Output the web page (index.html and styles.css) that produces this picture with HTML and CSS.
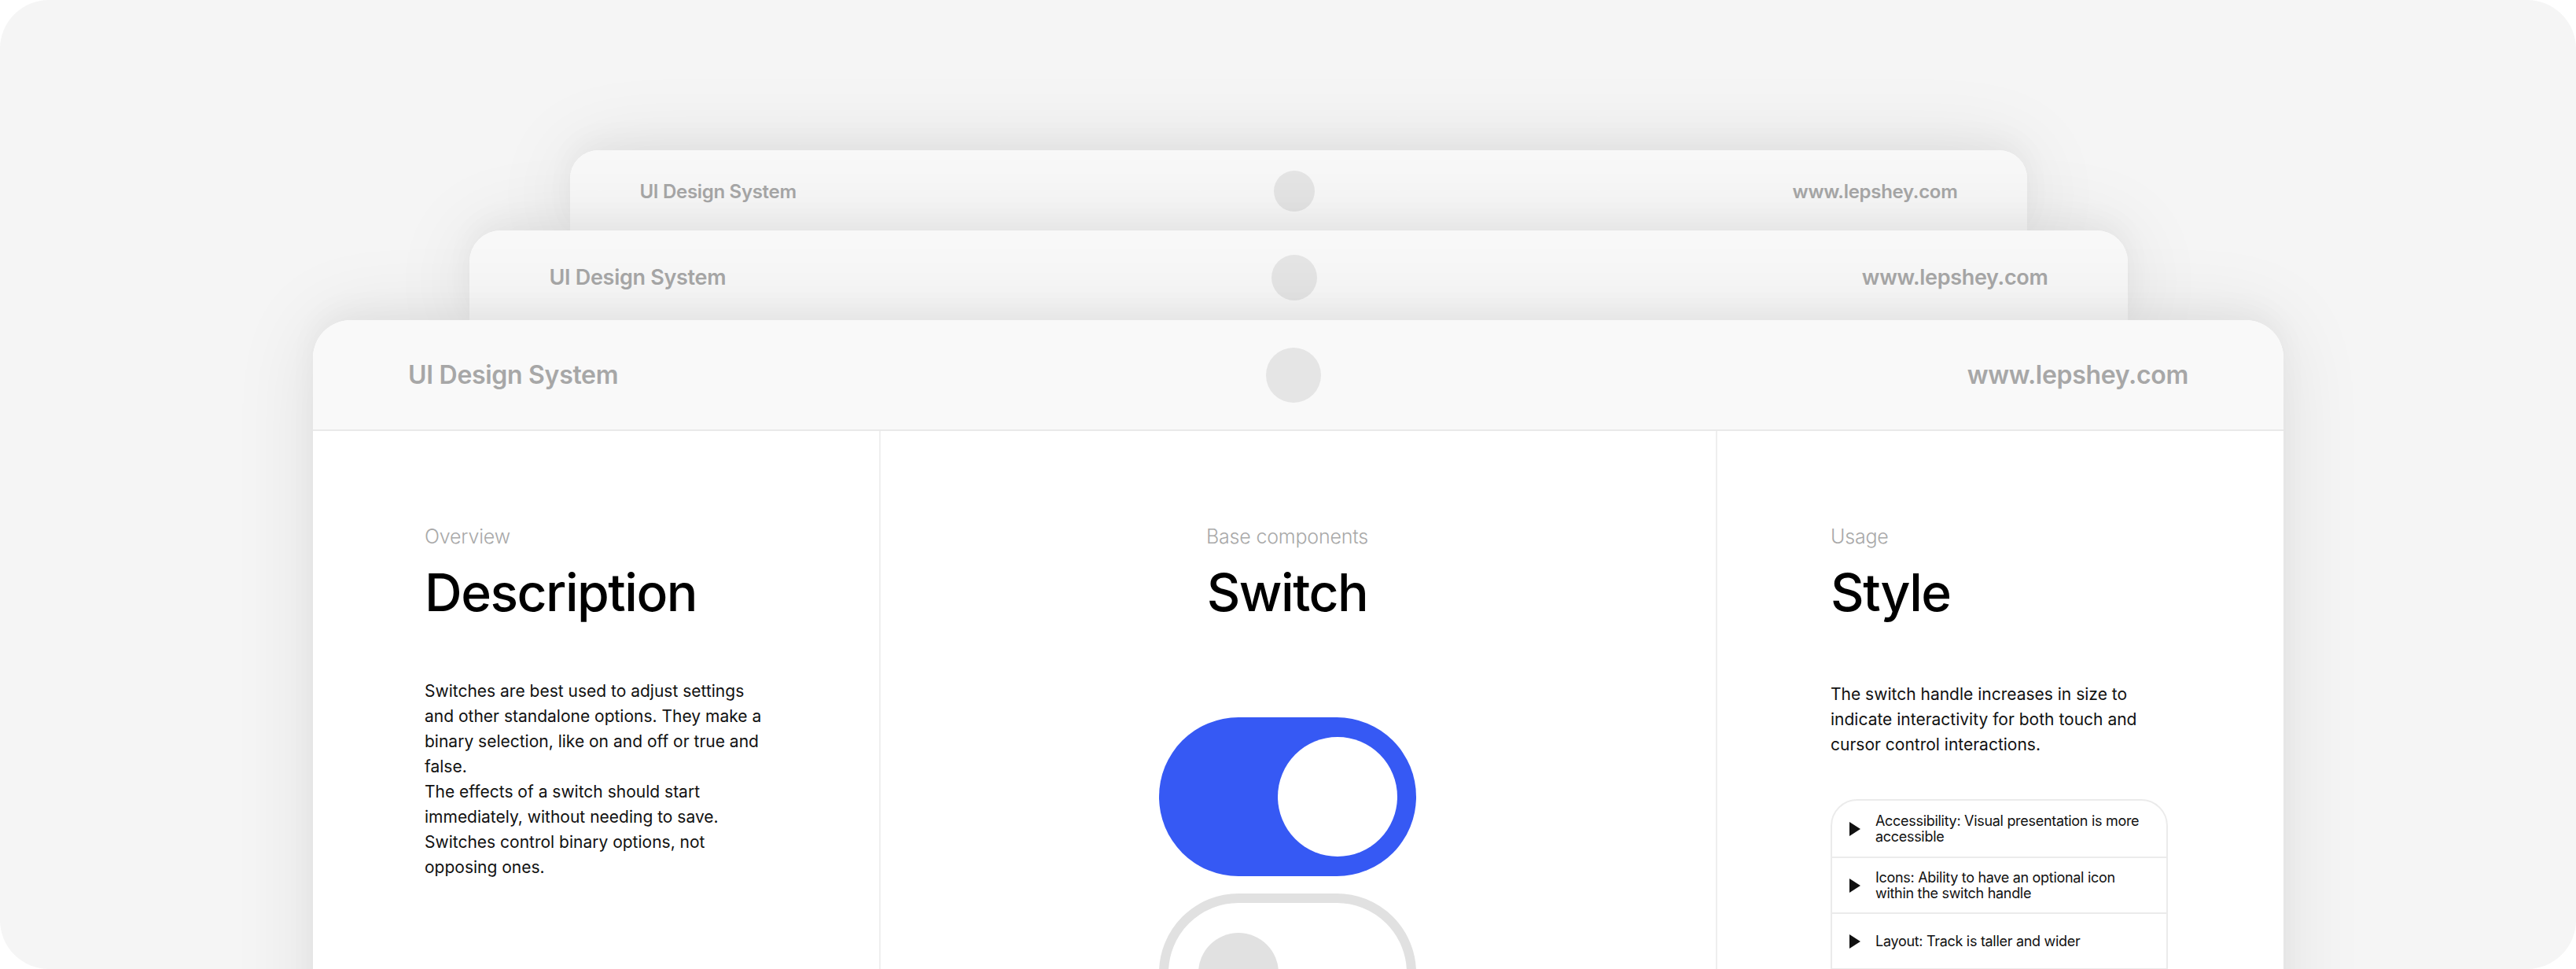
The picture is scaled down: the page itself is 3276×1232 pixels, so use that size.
FILE: index.html
```html
<!DOCTYPE html>
<html lang="en">
<head>
<meta charset="utf-8">
<title>Switch – UI Design System</title>
<link rel="stylesheet" href="styles.css">
</head>
<body>
<div class="frame">
  <div class="card card-back3">
    <header class="bar">
      <span class="brand">UI Design System</span>
      <span class="dot"></span>
      <span class="url">www.lepshey.com</span>
    </header>
  </div>
  <div class="card card-back2">
    <header class="bar">
      <span class="brand">UI Design System</span>
      <span class="dot"></span>
      <span class="url">www.lepshey.com</span>
    </header>
  </div>
  <div class="card card-front">
    <header class="bar">
      <span class="brand">UI Design System</span>
      <span class="dot"></span>
      <span class="url">www.lepshey.com</span>
    </header>
    <div class="body">
      <section class="col col-desc">
        <div class="eyebrow">Overview</div>
        <h1 class="title">Description</h1>
        <p class="text text-desc">Switches are best used to adjust settings and other standalone options. They make a binary selection, like on and off or true and false.<br>The effects of a switch should start immediately, without needing to save.<br>Switches control binary options, not opposing ones.</p>
      </section>
      <section class="col col-switch">
        <div class="eyebrow">Base components</div>
        <h1 class="title">Switch</h1>
        <div class="switch switch-on"><span class="knob"></span></div>
        <div class="switch switch-off"><span class="knob"></span></div>
      </section>
      <section class="col col-style">
        <div class="eyebrow">Usage</div>
        <h1 class="title">Style</h1>
        <p class="text text-style">The switch handle increases in size to indicate interactivity for both touch and cursor control interactions.</p>
        <ul class="list">
          <li class="item"><span class="tri"></span><span>Accessibility: Visual presentation is more accessible</span></li>
          <li class="item"><span class="tri"></span><span>Icons: Ability to have an optional icon within the switch handle</span></li>
          <li class="item"><span class="tri"></span><span>Layout: Track is taller and wider</span></li>
        </ul>
      </section>
    </div>
  </div>
</div>
</body>
</html>
```
FILE: styles.css
```css
html, body {
  margin: 0;
  padding: 0;
  background: #ffffff;
}

body {
  font-family: Inter, "Noto Sans", "Liberation Sans", sans-serif;
  color: #111111;
}

.frame {
  width: 3276px;
  height: 1232px;
  box-sizing: border-box;
  background: #f5f5f5;
  border-radius: 62px;
  overflow: hidden;
  display: flex;
  flex-direction: column;
  align-items: center;
  padding-top: 191px;
  padding-left: 26px;
}

.card {
  flex-shrink: 0;
  background: #ffffff;
  box-shadow: 0 0 110px rgba(0, 0, 0, 0.09), 0 -14px 36px rgba(0, 0, 0, 0.035);
}

.bar {
  display: grid;
  grid-template-columns: 1fr auto 1fr;
  align-items: center;
  background: #f8f8f8;
  box-sizing: border-box;
  color: #a7a7a7;
  font-weight: 600;
  letter-spacing: -0.3px;
}

.brand { justify-self: start; }
.url { justify-self: end; }

.dot {
  display: block;
  border-radius: 50%;
  background: #e5e5e5;
  margin-right: 12px;
}

/* back card 3 */
.card-back3 {
  width: 1853px;
  height: 104px;
  margin-bottom: -2px;
  border-radius: 36px 36px 0 0;
  overflow: hidden;
}
.card-back3 .bar {
  height: 104px;
  padding: 0 88px 0 89px;
  font-size: 24px;
}
.card-back3 .dot { width: 52px; height: 52px; }

/* back card 2 */
.card-back2 {
  width: 2109px;
  height: 119px;
  margin-bottom: -5px;
  border-radius: 40px 40px 0 0;
  overflow: hidden;
}
.card-back2 .bar {
  height: 119px;
  padding: 0 101px 0 102px;
  font-size: 27px;
}
.card-back2 .dot { width: 58px; height: 58px; }

/* front card */
.card-front {
  width: 2506px;
  height: 1000px;
  border-radius: 48px 48px 0 0;
  overflow: hidden;
  display: flex;
  flex-direction: column;
}
.card-front .bar {
  height: 141px;
  padding: 0 121px;
  font-size: 32px;
  background: #f9f9f9;
  border-bottom: 2px solid #e9e9e9;
}
.card-front .dot { width: 70px; height: 70px; }

.body {
  flex: 1;
  display: grid;
  grid-template-columns: 720px 1066px 1fr;
}

.col {
  box-sizing: border-box;
  padding-top: 117px;
}

.col-desc { padding-left: 142px; }

.col-switch {
  border-left: 2px solid #efefef;
  border-right: 2px solid #efefef;
  padding-right: 28px;
  display: flex;
  flex-direction: column;
  align-items: center;
}

.col-style { padding-left: 144px; }

.eyebrow {
  font-size: 25px;
  line-height: 34px;
  font-weight: 300;
  color: #a9a9a9;
  letter-spacing: -0.2px;
}

.title {
  margin: 14px 0 0;
  font-size: 66px;
  line-height: 80px;
  font-weight: 500;
  letter-spacing: -1.5px;
  color: #000000;
}

.text {
  margin: 70px 0 0;
  font-size: 21px;
  line-height: 32px;
  font-weight: 400;
  color: #111111;
}

.text-desc { width: 440px; }
.text-style { width: 410px; margin-top: 74px; }

.switch {
  box-sizing: border-box;
  width: 327px;
  height: 202px;
  border-radius: 101px;
  display: flex;
  align-items: center;
  flex-shrink: 0;
}

.switch-on {
  margin-top: 119px;
  background: #3659f4;
  justify-content: flex-end;
  padding-right: 24px;
}
.switch-on .knob {
  width: 152px;
  height: 152px;
  border-radius: 50%;
  background: #ffffff;
}

.switch-off {
  margin-top: 22px;
  border: 12px solid #e1e1e1;
  padding-left: 38px;
}
.switch-off .knob {
  width: 102px;
  height: 102px;
  border-radius: 50%;
  background: #e1e1e1;
}

.list {
  list-style: none;
  margin: 53px 0 0;
  padding: 0;
  width: 429px;
  box-sizing: border-box;
  border: 2px solid #ebebeb;
  border-radius: 34px 34px 0 0;
}

.item {
  display: flex;
  align-items: center;
  gap: 19px;
  min-height: 71px;
  box-sizing: border-box;
  padding: 8px 20px 8px 22px;
  font-size: 18px;
  line-height: 20px;
  color: #111111;
  letter-spacing: -0.3px;
}

.item + .item {
  border-top: 2px solid #ebebeb;
}

.tri {
  flex-shrink: 0;
  width: 0;
  height: 0;
  border-left: 14px solid #111111;
  border-top: 9px solid transparent;
  border-bottom: 9px solid transparent;
}
```
